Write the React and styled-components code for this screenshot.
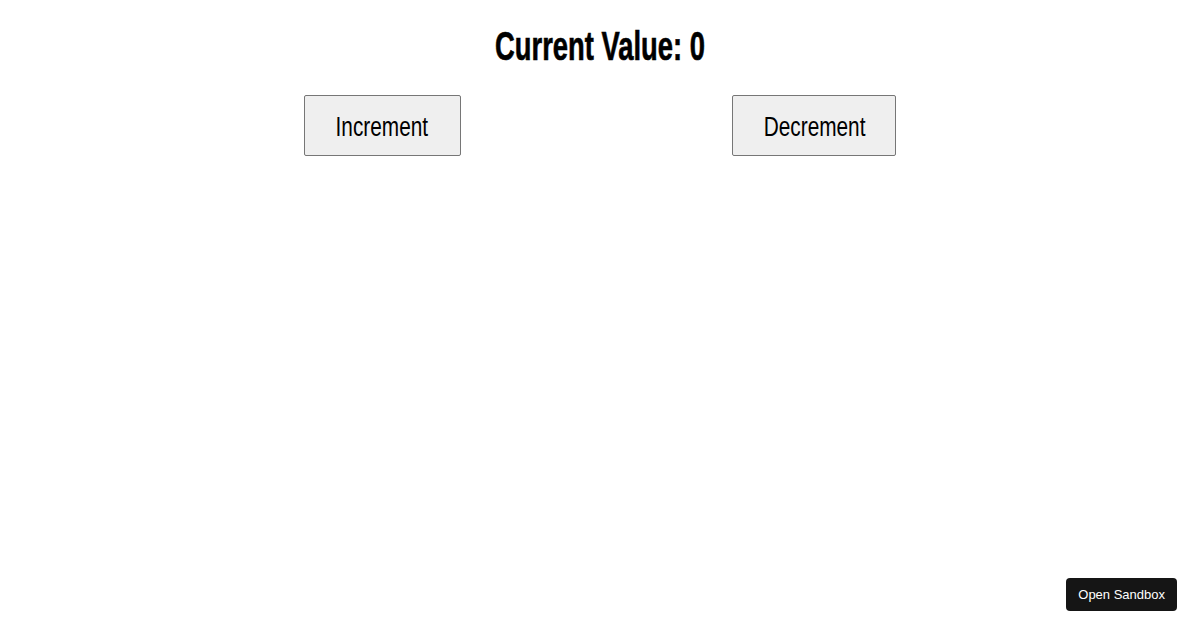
import React, { useState } from "react"
import styled, { createGlobalStyle } from "styled-components"

const GlobalStyle = createGlobalStyle`
  html, body {
    margin: 0;
    padding: 0;
    background: #fff;
  }
  body {
    font-family: "Liberation Sans", Arial, sans-serif;
    color: #000;
  }
`

const Page = styled.main`
  width: 1200px;
  min-height: 630px;
  padding-top: 16px;
  box-sizing: border-box;
`

const Title = styled.h1`
  margin: 0;
  height: 60px;
  line-height: 60px;
  text-align: center;
  font-size: 38px;
  font-weight: 700;
  -webkit-text-stroke: 0.6px #000;
  transform: scale(0.72, 1.08);
`

const Controls = styled.div`
  display: flex;
  justify-content: space-around;
  align-items: center;
  width: 864px;
  margin: 19px auto 0;
`

const CounterButton = styled.button`
  width: ${(p) => p.$width}px;
  height: 61px;
  padding: 0;
  font-family: "Liberation Sans", Arial, sans-serif;
  font-size: 26px;
  color: #000;
  background: #efefef;
  border: 1px solid #767676;
  border-radius: 2px;
  cursor: pointer;
  white-space: nowrap;

  span {
    display: inline-block;
    transform: scale(0.8, 1.08) translateY(1px);
  }
`

const SandboxLink = styled.a`
  position: fixed;
  right: 23px;
  bottom: 19px;
  display: flex;
  align-items: center;
  height: 33px;
  padding: 0 12px;
  background: #151515;
  color: #fff;
  border-radius: 4px;
  font-family: "Liberation Sans", Arial, sans-serif;
  font-size: 13px;
  text-decoration: none;
`

export default function App() {
  const [value, setValue] = useState(0)

  return (
    <>
      <GlobalStyle />
      <Page>
        <Title>Current Value: {value}</Title>
        <Controls>
          <CounterButton $width={157} onClick={() => setValue((v) => v + 1)}>
            <span>Increment</span>
          </CounterButton>
          <CounterButton $width={164} onClick={() => setValue((v) => v - 1)}>
            <span>Decrement</span>
          </CounterButton>
        </Controls>
      </Page>
      <SandboxLink href="#">Open Sandbox</SandboxLink>
    </>
  )
}
